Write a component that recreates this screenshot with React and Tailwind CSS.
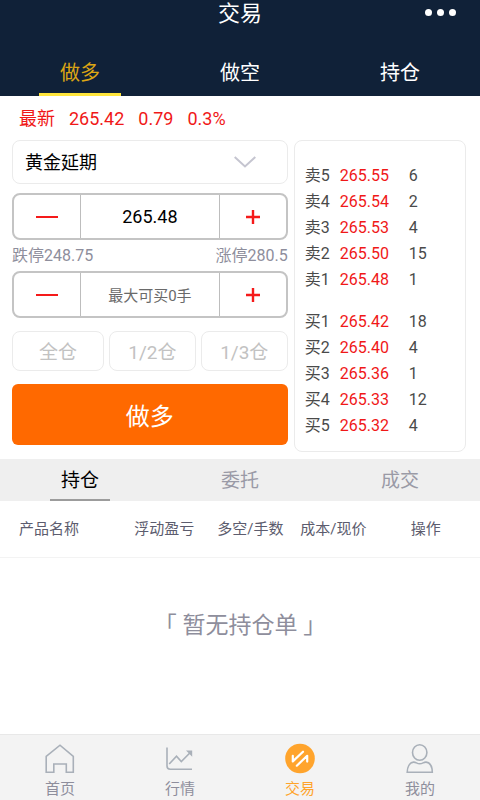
import { useState } from 'react';

const topTabs = ['做多', '做空', '持仓'];

const asks = [
  ['卖5', '265.55', '6'],
  ['卖4', '265.54', '2'],
  ['卖3', '265.53', '4'],
  ['卖2', '265.50', '15'],
  ['卖1', '265.48', '1'],
];

const bids = [
  ['买1', '265.42', '18'],
  ['买2', '265.40', '4'],
  ['买3', '265.36', '1'],
  ['买4', '265.33', '12'],
  ['买5', '265.32', '4'],
];

function HomeIcon() {
  return (
    <svg viewBox="0 0 32 32" className="size-8" fill="none" stroke="#a9b0b9" strokeWidth="1.6" aria-hidden="true">
      <path d="M2.2 29.2V13.3L16 2.2l13.3 11.1v15.9h-7V21H9.8v8.2z" />
    </svg>
  );
}

function ChartIcon() {
  return (
    <svg viewBox="0 0 32 32" className="size-8" fill="none" stroke="#a9b0b9" strokeWidth="1.6" aria-hidden="true">
      <path d="M3 4.500v18.500q0 3.200 3.200 3.200H28" />
      <path d="M5.200 21l7.300-7.800 4.800 5.300 9-9" />
      <path d="M22 7.500h6.200v6.200z" fill="#a9b0b9" stroke="none" />
    </svg>
  );
}

function TradeIcon() {
  return (
    <svg viewBox="0 0 32 32" className="size-8" fill="none" aria-hidden="true">
      <circle cx="16" cy="15.500" r="14.800" fill="#ffa42c" />
      <path d="M19 8.700L8.800 18.400V12.800M12.800 22.700L23.200 12.800v5.800" stroke="#fff" strokeWidth="2.200" strokeLinecap="round" strokeLinejoin="round" />
    </svg>
  );
}

function UserIcon() {
  return (
    <svg viewBox="0 0 32 32" className="size-8" fill="none" stroke="#a9b0b9" strokeWidth="1.600" aria-hidden="true">
      <ellipse cx="15.700" cy="9.500" rx="7.200" ry="7.700" />
      <path d="M3.200 29.300c.1-5.500 2.400-9.800 6.300-10.200 2.500-.2 3.200 1.700 6.200 1.700s3.900-1.900 6.400-1.700c3.900.4 6.100 4.700 6.200 10.200z" />
    </svg>
  );
}

const navItems = [
  ['首页', HomeIcon],
  ['行情', ChartIcon],
  ['交易', TradeIcon],
  ['我的', UserIcon],
];

function Stepper({ name, value, placeholder, onChange, inputClass }) {
  const step = (delta) => onChange(String(Math.max(0, Number(value || 0) + delta)));
  return (
    <div className="flex h-[47px] overflow-hidden rounded-lg border-2 border-[#c4c4c4]">
      <button type="button" aria-label={`减少${name}`} onClick={() => step(-1)} className="flex w-[66px] items-center justify-center">
        <svg viewBox="0 0 22 14" className="h-3.5 w-[22px]" stroke="#f51a1a" strokeWidth="2" aria-hidden="true">
          <path d="M0 7h22" />
        </svg>
      </button>
      <input
        aria-label={name}
        value={value}
        placeholder={placeholder}
        onChange={(e) => onChange(e.target.value)}
        className={`min-w-0 flex-1 border-x border-[#bdbdbd] text-center outline-none placeholder:text-[#6a6a6a] ${inputClass}`}
      />
      <button type="button" aria-label={`增加${name}`} onClick={() => step(1)} className="flex w-[66px] items-center justify-center">
        <svg viewBox="0 0 14 14" className="size-3.5" stroke="#f51a1a" strokeWidth="2.4" aria-hidden="true">
          <path d="M0 7h14M7 0v14" />
        </svg>
      </button>
    </div>
  );
}

function BookRows({ rows }) {
  return rows.map(([level, price, amount]) => (
    <tr key={level} className="h-[26px]">
      <th scope="row" className="w-[35px] p-0 text-left font-normal">{level}</th>
      <td className="w-[69px] p-0 text-[#f01818]">{price}</td>
      <td className="p-0">{amount}</td>
    </tr>
  ));
}

export default function App() {
  const [price, setPrice] = useState('265.48');
  const [lots, setLots] = useState('');

  return (
    <div className="flex min-h-screen flex-col bg-white font-['Roboto','Noto_Sans_CJK_SC',sans-serif] text-black">
      <header className="bg-[#102138] text-white">
        <div className="grid h-12 grid-cols-3 items-start">
          <h1 className="col-start-2 text-center text-[22px] leading-7">交易</h1>
          <button type="button" aria-label="更多" className="mr-6 flex h-6 items-center gap-[5px] justify-self-end">
            <span className="size-[7px] rounded-full bg-white" />
            <span className="size-[7px] rounded-full bg-white" />
            <span className="size-[7px] rounded-full bg-white" />
          </button>
        </div>
        <nav className="grid h-12 grid-cols-3 justify-items-center text-xl">
          {topTabs.map((tab, i) => (
            <button
              key={tab}
              type="button"
              className={
                i === 0
                  ? 'w-[82px] border-b-[3px] border-[#ffe53b] pt-1 text-[#dca514]'
                  : 'w-[82px] border-b-[3px] border-transparent pt-1'
              }
            >
              {tab}
            </button>
          ))}
        </nav>
      </header>

      <p className="flex h-11 items-center gap-3.5 pt-0.5 pl-[19px] text-lg text-[#f01818]">
        <span>最新</span>
        <span>265.42</span>
        <span>0.79</span>
        <span>0.3%</span>
      </p>

      <main className="flex-1">
        <div className="grid grid-cols-[minmax(0,8fr)_minmax(0,5fr)] gap-1.5 border-b border-[#efefef] pr-3.5 pb-[7px] pl-3">
          <form className="flex flex-col pb-[7px]" onSubmit={(e) => e.preventDefault()}>
            <div className="grid items-center">
              <select
                aria-label="合约"
                className="col-start-1 row-start-1 h-11 appearance-none rounded-lg border border-[#ebebeb] bg-white px-3 pt-0.5 text-lg"
              >
                <option>黄金延期</option>
              </select>
              <svg viewBox="0 0 22 12" className="pointer-events-none col-start-1 row-start-1 mr-8 h-3 w-[22px] justify-self-end" fill="none" stroke="#c5c5d0" strokeWidth="2" aria-hidden="true">
                <path d="M.7 1L11 10.500 21.300 1" />
              </svg>
            </div>
            <div className="mt-[9px]">
              <Stepper name="价格" value={price} onChange={setPrice} inputClass="text-lg" />
            </div>
            <div className="flex h-[31px] items-center justify-between text-base text-[#8e8e9c]">
              <span>跌停248.75</span>
              <span>涨停280.5</span>
            </div>
            <Stepper name="手数" value={lots} placeholder="最大可买0手" onChange={setLots} inputClass="pt-1 text-[15px]" />
            <div className="mt-[13px] grid grid-cols-[92fr_87fr_87fr] gap-[5px] text-[19px] text-[#c2c2c2]">
              <button type="button" className="h-10 rounded-lg border border-[#ebebeb] pt-1">全仓</button>
              <button type="button" className="h-10 rounded-lg border border-[#ebebeb] pt-1">1/2仓</button>
              <button type="button" className="h-10 rounded-lg border border-[#ebebeb] pt-1">1/3仓</button>
            </div>
            <button type="submit" className="mt-[13px] h-[61px] rounded-md bg-[#ff6900] pt-1 text-2xl text-white">做多</button>
          </form>

          <section aria-label="盘口" className="rounded-lg border border-[#ebebeb] pt-[22px] pl-2.5">
            <table className="w-full table-fixed border-collapse text-base leading-6 text-[#4a4a4a]">
              <tbody>
                <BookRows rows={asks} />
              </tbody>
            </table>
            <table className="mt-4 w-full table-fixed border-collapse text-base leading-6 text-[#4a4a4a]">
              <tbody>
                <BookRows rows={bids} />
              </tbody>
            </table>
          </section>
        </div>

        <div className="grid h-[41px] grid-cols-3 justify-items-center bg-[#efefef] text-[19px] text-[#9a9aa6]">
          <button type="button" className="w-15 border-b-2 border-[#9c9c9c] pt-1 text-black">持仓</button>
          <button type="button" className="w-15 border-b-2 border-transparent pt-1">委托</button>
          <button type="button" className="w-15 border-b-2 border-transparent pt-1">成交</button>
        </div>

        <div className="border-b border-[#f3f3f3] pl-[19px]">
          <table className="w-full table-fixed border-collapse text-[15px] text-[#5c5c6e]">
            <thead>
              <tr className="h-14 text-left">
                <th scope="col" className="w-[25%] p-0 font-normal">产品名称</th>
                <th scope="col" className="w-[18%] p-0 font-normal">浮动盈亏</th>
                <th scope="col" className="w-[18%] p-0 font-normal">多空/手数</th>
                <th scope="col" className="w-[24%] p-0 font-normal">成本/现价</th>
                <th scope="col" className="p-0 font-normal">操作</th>
              </tr>
            </thead>
          </table>
        </div>
        <p className="py-[50px] text-center text-[23px] leading-9 text-[#8e8e9c]">「 暂无持仓单 」</p>
      </main>

      <nav className="grid h-[66px] grid-cols-4 border-t border-[#e8e8e8] bg-[#f3f3f3] text-[15px] leading-5">
        {navItems.map(([label, Icon]) => (
          <a
            key={label}
            href="#"
            className={
              label === '交易'
                ? 'flex flex-col items-center gap-1 pt-2 text-[#ffa42c]'
                : 'flex flex-col items-center gap-1 pt-2 text-[#8e8e9c]'
            }
          >
            <Icon />
            <span>{label}</span>
          </a>
        ))}
      </nav>
    </div>
  );
}
